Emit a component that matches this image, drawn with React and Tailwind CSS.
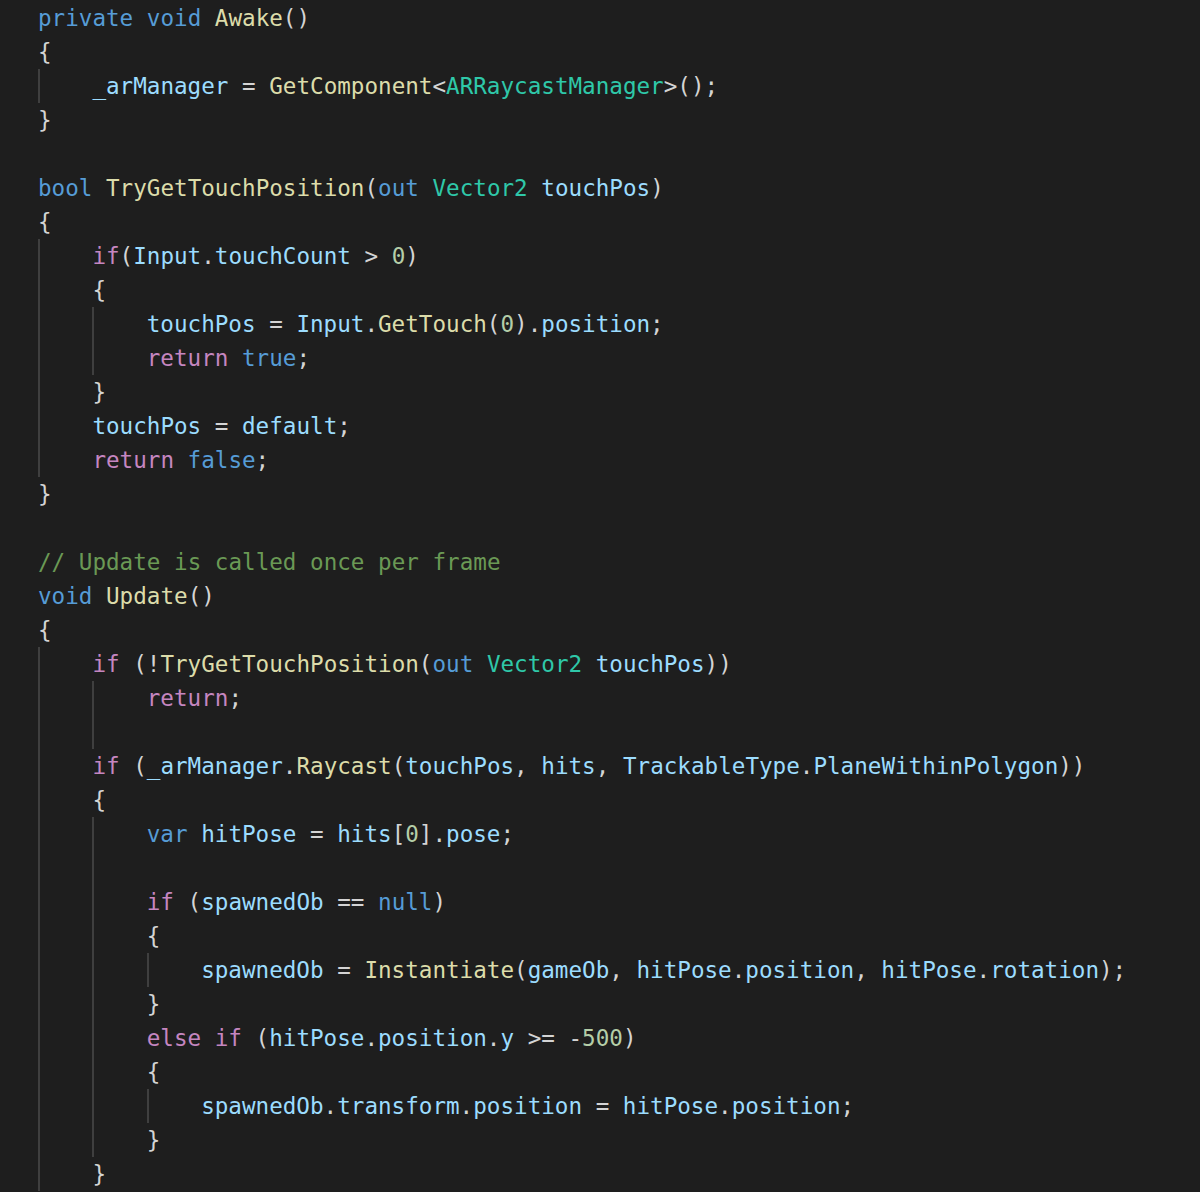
import React from "react";

const C = {
  k: "text-[#569cd6]",
  c: "text-[#c586c0]",
  f: "text-[#dcdcaa]",
  t: "text-[#2fc8a9]",
  v: "text-[#9cdcfe]",
  n: "text-[#b5cea8]",
  m: "text-[#6a9955]",
  p: "text-[#d4d4d4]",
};

// [guides, tokens]
const LINES = [
  [0, [["private void ", "k"], ["Awake", "f"], ["()", "p"]]],
  [0, [["{", "p"]]],
  [1, [["_arManager", "v"], [" = ", "p"], ["GetComponent", "f"], ["<", "p"], ["ARRaycastManager", "t"], [">();", "p"]]],
  [0, [["}", "p"]]],
  [0, []],
  [0, [["bool ", "k"], ["TryGetTouchPosition", "f"], ["(", "p"], ["out ", "k"], ["Vector2 ", "t"], ["touchPos", "v"], [")", "p"]]],
  [0, [["{", "p"]]],
  [1, [["if", "c"], ["(", "p"], ["Input", "v"], [".", "p"], ["touchCount", "v"], [" > ", "p"], ["0", "n"], [")", "p"]]],
  [1, [["{", "p"]]],
  [2, [["touchPos", "v"], [" = ", "p"], ["Input", "v"], [".", "p"], ["GetTouch", "f"], ["(", "p"], ["0", "n"], [").", "p"], ["position", "v"], [";", "p"]]],
  [2, [["return ", "c"], ["true", "k"], [";", "p"]]],
  [1, [["}", "p"]]],
  [1, [["touchPos", "v"], [" = ", "p"], ["default", "v"], [";", "p"]]],
  [1, [["return ", "c"], ["false", "k"], [";", "p"]]],
  [0, [["}", "p"]]],
  [0, []],
  [0, [["// Update is called once per frame", "m"]]],
  [0, [["void ", "k"], ["Update", "f"], ["()", "p"]]],
  [0, [["{", "p"]]],
  [1, [["if ", "c"], ["(!", "p"], ["TryGetTouchPosition", "f"], ["(", "p"], ["out ", "k"], ["Vector2 ", "t"], ["touchPos", "v"], ["))", "p"]]],
  [2, [["return", "c"], [";", "p"]]],
  [2, []],
  [1, [["if ", "c"], ["(", "p"], ["_arManager", "v"], [".", "p"], ["Raycast", "f"], ["(", "p"], ["touchPos", "v"], [", ", "p"], ["hits", "v"], [", ", "p"], ["TrackableType", "v"], [".", "p"], ["PlaneWithinPolygon", "v"], ["))", "p"]]],
  [1, [["{", "p"]]],
  [2, [["var ", "k"], ["hitPose", "v"], [" = ", "p"], ["hits", "v"], ["[", "p"], ["0", "n"], ["].", "p"], ["pose", "v"], [";", "p"]]],
  [2, []],
  [2, [["if ", "c"], ["(", "p"], ["spawnedOb", "v"], [" == ", "p"], ["null", "k"], [")", "p"]]],
  [2, [["{", "p"]]],
  [3, [["spawnedOb", "v"], [" = ", "p"], ["Instantiate", "f"], ["(", "p"], ["gameOb", "v"], [", ", "p"], ["hitPose", "v"], [".", "p"], ["position", "v"], [", ", "p"], ["hitPose", "v"], [".", "p"], ["rotation", "v"], [");", "p"]]],
  [2, [["}", "p"]]],
  [2, [["else if ", "c"], ["(", "p"], ["hitPose", "v"], [".", "p"], ["position", "v"], [".", "p"], ["y", "v"], [" >= -", "p"], ["500", "n"], [")", "p"]]],
  [2, [["{", "p"]]],
  [3, [["spawnedOb", "v"], [".", "p"], ["transform", "v"], [".", "p"], ["position", "v"], [" = ", "p"], ["hitPose", "v"], [".", "p"], ["position", "v"], [";", "p"]]],
  [2, [["}", "p"]]],
  [1, [["}", "p"]]],
];

function Line({ guides, tokens }) {
  return (
    <div className="flex h-[34px] items-stretch pl-[38px]">
      {Array.from({ length: guides }).map((_, i) => (
        <span key={i} className="w-[54.38px] shrink-0 border-l-[2px] border-[#3f3f3f]" />
      ))}
      <span className="flex items-center whitespace-pre leading-[34px]">
        {tokens.map(([text, col], i) => (
          <span key={i} className={C[col]}>
            {text}
          </span>
        ))}
      </span>
    </div>
  );
}

export default function App() {
  return (
    <div className="w-[1200px] h-[1192px] overflow-hidden bg-[#1e1e1e] pt-px font-['DejaVu_Sans_Mono',monospace] text-[22.6px] text-[#d4d4d4]">
      {LINES.map(([g, t], i) => (
        <Line key={i} guides={g} tokens={t} />
      ))}
    </div>
  );
}
